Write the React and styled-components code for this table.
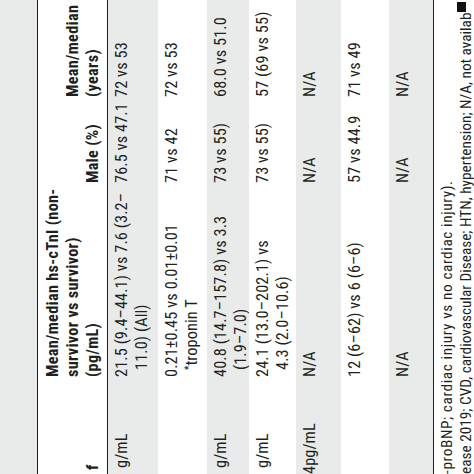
import React from "react";
import styled, { createGlobalStyle } from "styled-components";

const GlobalStyle = createGlobalStyle`
  * {
    box-sizing: border-box;
  }
  html,
  body {
    margin: 0;
    padding: 0;
    background: #ffffff;
  }
  body {
    font-family: "Roboto Condensed", "Liberation Sans", sans-serif;
  }
`;

const SHADE = "#e9ebeb";
const INK = "#231f20";
const RULE = "#1d1d1d";

const Viewport = styled.div`
  width: 474px;
  height: 474px;
  overflow: hidden;
`;

// the scanned table lies on its side, so we lay it out upright and turn it
const Sheet = styled.div`
  width: 474px;
  height: 474px;
  transform: rotate(-90deg);
  transform-origin: 50% 50%;
  display: flex;
  flex-direction: column;
  color: ${INK};
  font-size: 16.3px;
  letter-spacing: 0.1px;
  background: #ffffff;
`;

const TitleBand = styled.div`
  flex: none;
  height: 37.5px;
  background: ${SHADE};
  border-bottom: 1.5px solid ${RULE};
`;

const Row = styled.div`
  flex: none;
  display: grid;
  grid-template-columns: 93px 194px 86px 1fr;
  height: ${(p) => p.$h}px;
  background: ${(p) => (p.$shade ? SHADE : "#ffffff")};
`;

const HeaderRow = styled(Row)`
  align-items: end;
  font-weight: 700;
  letter-spacing: 0.3px;
  padding-bottom: 4px;
  border-bottom: 1.5px solid ${RULE};
`;

const Cell = styled.div`
  padding-top: 4px;
  padding-left: ${(p) => (p.$hang ? 11 : 4)}px;
  text-indent: ${(p) => (p.$hang ? -7 : 0)}px;
  line-height: 20px;
  white-space: nowrap;
`;

const HeadCell = styled.div`
  padding-left: ${(p) => (p.$indent != null ? p.$indent : 4)}px;
  line-height: 20px;
  white-space: nowrap;
`;

const UnitCell = styled(Cell)`
  padding-left: ${(p) => p.$indent}px;
  text-indent: 0;
`;

const Sup = styled.sup`
  font-size: 10px;
  line-height: 0;
  vertical-align: 5px;
`;

const Footer = styled.div`
  flex: 1;
  border-top: 1.5px solid ${RULE};
  padding-top: 4px;
  font-size: 15.3px;
`;

const FootLine = styled.div`
  line-height: 19px;
  white-space: nowrap;
  letter-spacing: ${(p) => p.$spacing}px;
`;

const Mark = styled.span`
  display: inline-block;
  width: 10px;
  height: 9px;
  margin-left: 1px;
  background: #111111;
  vertical-align: top;
`;

const rows = [
  {
    h: 50,
    shade: true,
    unit: "g/mL",
    indent: 6,
    b: ["21.5 (9.4–44.1) vs 7.6 (3.2–", "11.0) (All)"],
    c: "76.5 vs 47.1",
    d: "72 vs 53",
  },
  {
    h: 49,
    shade: false,
    unit: "",
    b: ["0.21±0.45 vs 0.01±0.01", "troponin T"],
    star: true,
    c: "71 vs 42",
    d: "72 vs 53",
  },
  {
    h: 42,
    shade: true,
    unit: "g/mL",
    indent: 6,
    b: ["40.8 (14.7–157.8) vs 3.3", "(1.9–7.0)"],
    c: "73 vs 55)",
    d: "68.0 vs 51.0",
  },
  {
    h: 47,
    shade: false,
    unit: "g/mL",
    indent: 6,
    b: ["24.1 (13.0–202.1) vs", "4.3 (2.0–10.6)"],
    c: "73 vs 55)",
    d: "57 (69 vs 55)",
  },
  {
    h: 45,
    shade: true,
    unit: "4pg/mL",
    indent: 0,
    b: ["N/A"],
    c: "N/A",
    d: "N/A",
  },
  {
    h: 48,
    shade: false,
    unit: "",
    b: ["12 (6–62) vs 6 (6–6)"],
    c: "57 vs 44.9",
    d: "71 vs 49",
  },
  {
    h: 44,
    shade: true,
    unit: "",
    b: ["N/A"],
    c: "N/A",
    d: "N/A",
  },
];

const App = () => {
  return (
    <Viewport>
      <GlobalStyle />
      <Sheet>
        <TitleBand />
        <HeaderRow $h={70}>
          <HeadCell $indent={4}>f</HeadCell>
          <HeadCell>
            Mean/median hs-cTnI (non-
            <br />
            survivor vs survivor)
            <br />
            (pg/mL)
          </HeadCell>
          <HeadCell>Male (%)</HeadCell>
          <HeadCell>
            Mean/median
            <br />
            (years)
          </HeadCell>
        </HeaderRow>
        {rows.map((r, i) => (
          <Row key={i} $h={r.h} $shade={r.shade}>
            <UnitCell $indent={r.indent || 0}>{r.unit}</UnitCell>
            <Cell $hang>
              {r.b[0]}
              {r.b[1] && (
                <>
                  <br />
                  {r.star && <Sup>*</Sup>}
                  {r.b[1]}
                </>
              )}
            </Cell>
            <Cell>{r.c}</Cell>
            <Cell>{r.d}</Cell>
          </Row>
        ))}
        <Footer>
          <FootLine $spacing={0.6}>
            -proBNP; cardiac injury vs no cardiac injury).
          </FootLine>
          <FootLine $spacing={0}>
            ease 2019; CVD, cardiovascular Disease; HTN, hypertension; N/A,
            not availab
            <Mark />
          </FootLine>
        </Footer>
      </Sheet>
    </Viewport>
  );
};

export default App;
